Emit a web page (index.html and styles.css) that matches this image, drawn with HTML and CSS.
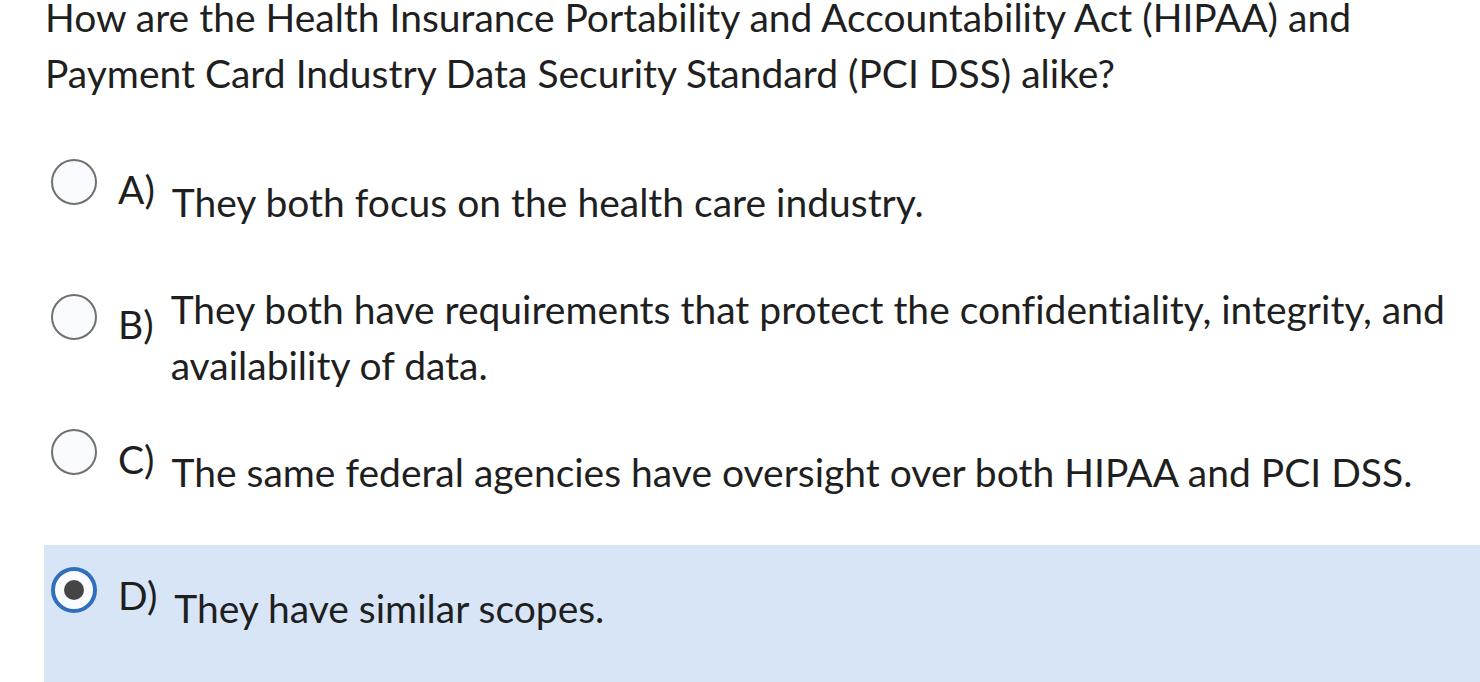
FILE: index.html
```html
<!DOCTYPE html>
<html lang="en">
<head>
<meta charset="utf-8">
<title>Question</title>
<link rel="stylesheet" href="styles.css">
</head>
<body>
<div class="question">How are the Health Insurance Portability and Accountability Act (HIPAA) and Payment Card Industry Data Security Standard (PCI DSS) alike?</div>
<div class="options">
  <div class="option">
    <span class="radio"></span>
    <span class="label">A)</span>
    <span class="text">They both focus on the health care industry.</span>
  </div>
  <div class="option">
    <span class="radio"></span>
    <span class="label">B)</span>
    <span class="text">They both have requirements that protect the confidentiality, integrity, and availability of data.</span>
  </div>
  <div class="option">
    <span class="radio"></span>
    <span class="label">C)</span>
    <span class="text">The same federal agencies have oversight over both HIPAA and PCI DSS.</span>
  </div>
  <div class="option selected">
    <span class="radio checked"></span>
    <span class="label">D)</span>
    <span class="text">They have similar scopes.</span>
  </div>
</div>
</body>
</html>
```
FILE: styles.css
```css
html, body {
  margin: 0;
  padding: 0;
  background: #ffffff;
  overflow: hidden;
}
body {
  font-family: Lato, "Noto Sans", sans-serif;
  color: #1f1f1f;
  font-size: 39px;
  line-height: 56px;
  font-variant-ligatures: none;
}
.question {
  margin-top: -11px;
  padding-left: 45px;
  padding-right: 20px;
}
.options {
  margin-top: 40px;
  padding-left: 44px;
}
.option {
  display: flex;
  align-items: center;
  padding: 18px 0 18px 7px;
}
.radio {
  flex: none;
  box-sizing: border-box;
  width: 46px;
  height: 46px;
  border-radius: 50%;
  border: 2px solid #707070;
  background: #f9fafe;
  margin-bottom: 40px;
  margin-right: 21px;
  display: flex;
  align-items: center;
  justify-content: center;
}
.radio.checked {
  border: 4px solid #2f6fbd;
  background: #fafbfe;
  margin-bottom: 36px;
}
.radio.checked::after {
  content: "";
  width: 20px;
  height: 20px;
  border-radius: 50%;
  background: #454545;
}
.label {
  flex: none;
  margin-bottom: 26px;
  margin-right: 17px;
}
.text {
  flex: 1;
  padding-right: 10px;
}
.option.selected {
  margin-top: 12px;
  padding-top: 22px;
  padding-bottom: 60px;
  background: #d7e5f7;
}
```
